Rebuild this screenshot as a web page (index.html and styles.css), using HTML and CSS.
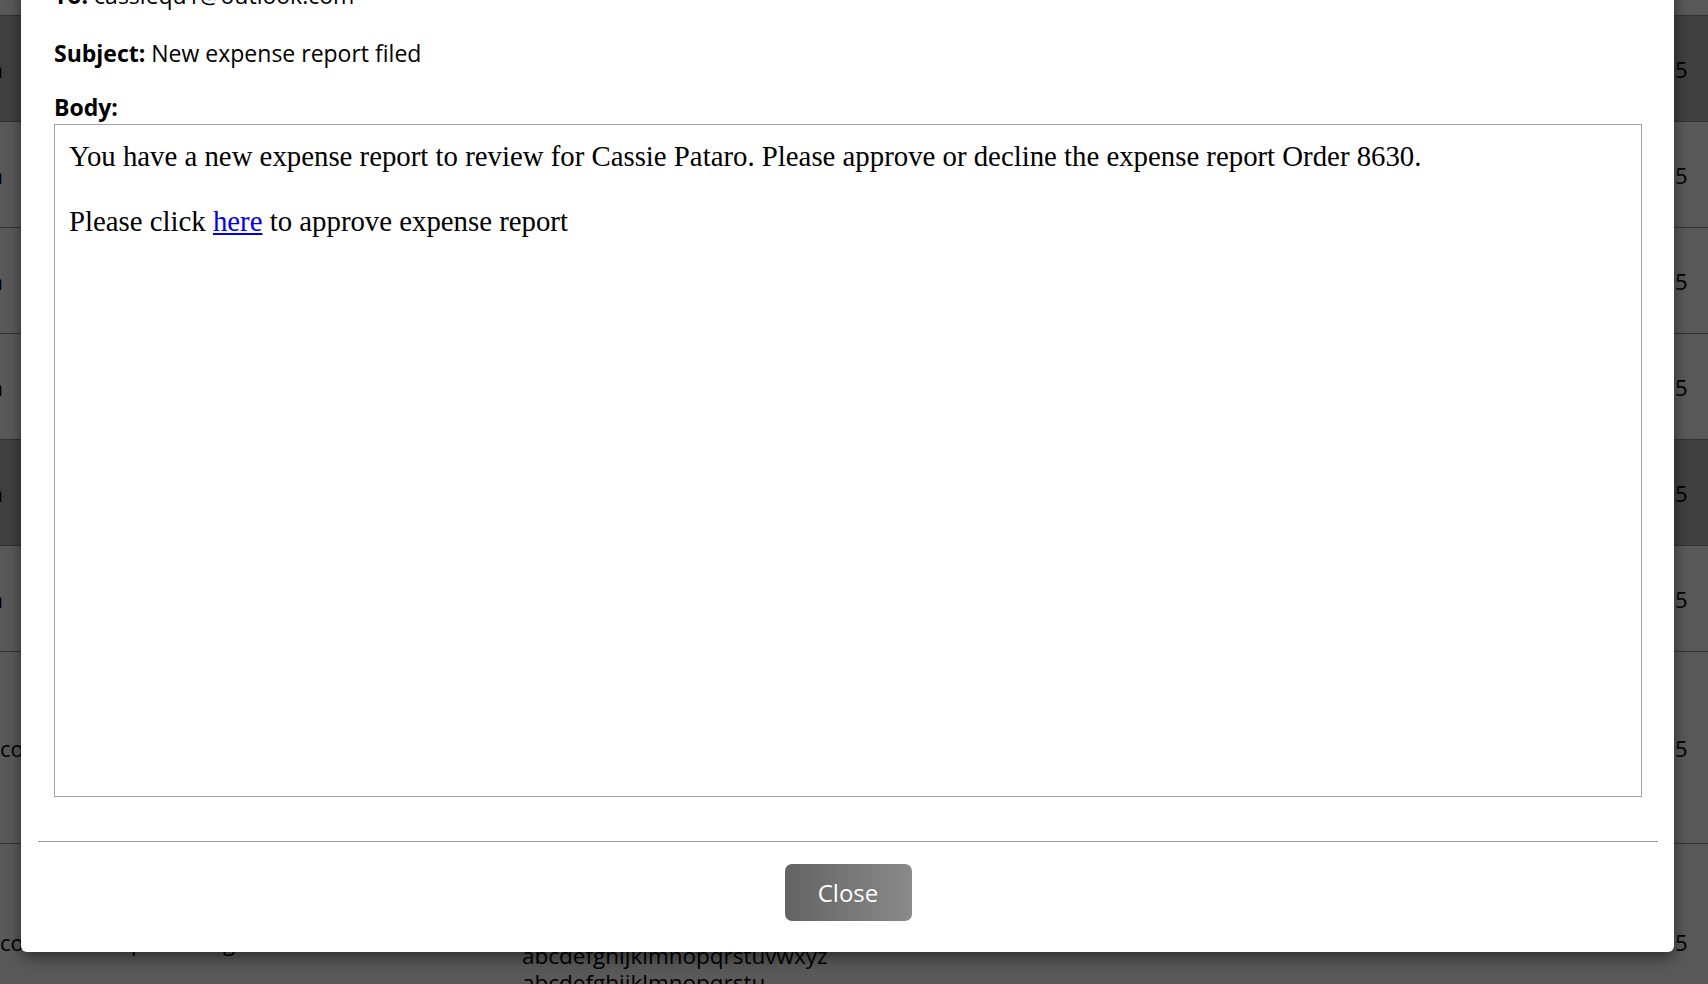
FILE: index.html
```html
<!DOCTYPE html>
<html lang="en">
<head>
<meta charset="utf-8">
<title>Email preview</title>
<link rel="stylesheet" href="styles.css">
</head>
<body>
<div class="page">
  <div class="table">
    <div class="row row-top"></div>
    <div class="row row-hl">
      <div class="cell cell-name"><span class="stub"><span>Morgan</span></span></div>
      <div class="cell cell-desc"></div>
      <div class="cell cell-num">5</div>
    </div>
    <div class="row">
      <div class="cell cell-name"><span class="stub"><span>Morgan</span></span></div>
      <div class="cell cell-desc"></div>
      <div class="cell cell-num">5</div>
    </div>
    <div class="row">
      <div class="cell cell-name"><span class="stub"><span>Morgan</span></span></div>
      <div class="cell cell-desc"></div>
      <div class="cell cell-num">5</div>
    </div>
    <div class="row">
      <div class="cell cell-name"><span class="stub"><span>Morgan</span></span></div>
      <div class="cell cell-desc"></div>
      <div class="cell cell-num">5</div>
    </div>
    <div class="row row-hl">
      <div class="cell cell-name"><span class="stub"><span>Morgan</span></span></div>
      <div class="cell cell-desc"></div>
      <div class="cell cell-num">5</div>
    </div>
    <div class="row">
      <div class="cell cell-name"><span class="stub"><span>Morgan</span></span></div>
      <div class="cell cell-desc"></div>
      <div class="cell cell-num">5</div>
    </div>
    <div class="row row-tall">
      <div class="cell cell-name">conference sponsoring</div>
      <div class="cell cell-desc"></div>
      <div class="cell cell-num">5</div>
    </div>
    <div class="row row-last">
      <div class="cell cell-name">conference sponsoring</div>
      <div class="cell cell-desc">abcdefghijklmnopqrstuvwxyz<br>abcdefghijklmnopqrstuvwxyz<br>abcdefghijklmnopqrstuvwxyz<br>abcdefghijklmnopqrstu</div>
      <div class="cell cell-num">5</div>
    </div>
  </div>
  <div class="overlay"></div>
  <div class="modal">
    <div class="modal-body">
      <p class="field field-to"><b>To:</b> cassiequ1@outlook.com</p>
      <p class="field field-subject"><b>Subject:</b> New expense report filed</p>
      <p class="field field-body"><b>Body:</b></p>
      <div class="mail-frame">
        <p class="mail-line">You have a new expense report to review for Cassie Pataro. Please approve or decline the expense report Order 8630.</p>
        <p class="mail-line">Please click <a href="#" class="mail-link">here</a> to approve expense report</p>
      </div>
    </div>
    <div class="modal-footer">
      <button type="button" class="btn-close">Close</button>
    </div>
  </div>
</div>
</body>
</html>
```

FILE: styles.css
```css
html, body {
  margin: 0;
  padding: 0;
  height: 100%;
  overflow: hidden;
}
body {
  font-family: "Open Sans", "Noto Sans", sans-serif;
  color: #000;
  background: #fff;
}
.page {
  position: relative;
  width: 1708px;
  height: 984px;
  overflow: hidden;
}

/* background table */
.table {
  display: flex;
  flex-direction: column;
  font-size: 22px;
  line-height: 30px;
}
.row {
  display: grid;
  grid-template-columns: 522px 1153px 1fr;
  align-items: center;
  height: 106px;
  box-sizing: border-box;
  border-bottom: 1px solid #8f8f8f;
  background: #fff;
  flex-shrink: 0;
}
.row-top { height: 16px; }
.row-hl { background: #b8b8b8; }
.row-tall { height: 192px; }
.row-last { height: 196px; border-bottom: 0; }
.cell { white-space: nowrap; }
.cell-desc { line-height: 27px; font-size: 22.5px; }
.stub {
  display: flex;
  justify-content: flex-end;
  width: 3px;
}
.overlay {
  position: absolute;
  inset: 0;
  background: rgba(0, 0, 0, 0.65);
}

/* modal */
.modal {
  position: absolute;
  top: -20px;
  left: 21px;
  width: 1653px;
  box-sizing: border-box;
  padding: 0 16px 0 17px;
  background: #fff;
  border-radius: 6px;
  box-shadow: 0 5px 15px rgba(0, 0, 0, 0.5);
}
.modal-body {
  padding: 0 16px 0 16px;
}
.field {
  margin: 0;
  font-size: 23px;
  line-height: 31px;
}
.field b { font-weight: 700; }
.field-to { margin-bottom: 27px; }
.field-subject { margin-bottom: 23px; }
.field-body { margin-bottom: 1px; }
.mail-frame {
  height: 673px;
  box-sizing: border-box;
  border: 1px solid #a3a3a3;
  padding: 15px 14px;
  font-family: "Liberation Serif", "Times New Roman", serif;
  font-size: 28.8px;
  line-height: 33px;
}
.mail-line {
  margin: 0 0 32px;
}
.mail-link { color: #0000ee; }
.modal-footer {
  margin-top: 44px;
  border-top: 1px solid #999;
  padding: 22px 0 31px;
  display: flex;
  justify-content: center;
}
.btn-close {
  width: 127px;
  height: 57px;
  border: 0;
  border-radius: 7px;
  background: linear-gradient(to right, #636363, #8a8a8a);
  color: #fff;
  font-family: "Open Sans", "Noto Sans", sans-serif;
  font-size: 24px;
  padding: 0;
  cursor: pointer;
}
```
